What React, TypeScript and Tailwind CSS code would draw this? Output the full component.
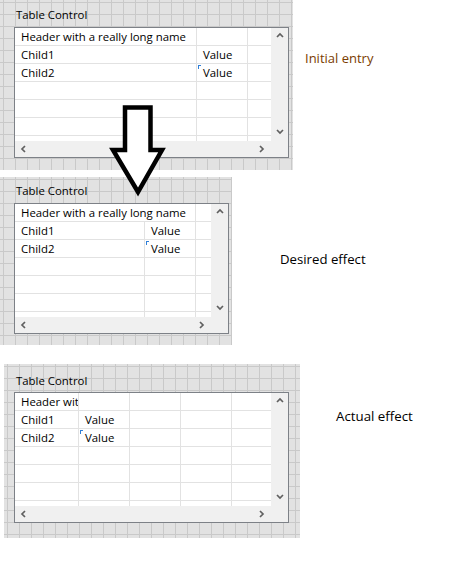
import React from "react"

const font = "font-['Segoe_UI','Open_Sans','Noto_Sans',sans-serif]"

const gridBg =
  "bg-[#e2e2e2] bg-[linear-gradient(to_right,#c9c9c9_1px,transparent_1px),linear-gradient(to_bottom,#c9c9c9_1px,transparent_1px)] bg-[size:12px_12px] bg-[position:3px_2px]"

type Row = { name: string; value?: string; mark?: boolean }

const rows: Row[] = [
  { name: "Header with a really long name" },
  { name: "Child1", value: "Value" },
  { name: "Child2", value: "Value", mark: true },
  { name: "" },
  { name: "" },
  { name: "" },
  { name: "" },
]

function Chevron({ dir }: { dir: "up" | "down" | "left" | "right" }) {
  const pts = {
    up: "1,5 4,2 7,5",
    down: "1,2 4,5 7,2",
    left: "5,1 2,4 5,7",
    right: "2,1 5,4 2,7",
  }[dir]
  return (
    <svg width="8" height="8" viewBox="0 0 8 8" className="block">
      <polyline points={pts} fill="none" stroke="#606060" strokeWidth="1.7" />
    </svg>
  )
}

function TableBox({ width, cols, spanHeader }: { width: number; cols: number[]; spanHeader?: boolean }) {
  return (
    <div
      className="flex h-[131px] flex-col border border-[#7d8187] bg-[#f0f0f0]"
      style={{ width }}
    >
      <div className="flex h-[113px]">
        <div className="h-full flex-1 overflow-hidden bg-white">
          {rows.map((r, i) => {
            // header row may span the first two columns
            const widths = i === 0 && spanHeader ? [cols[0] + cols[1], ...cols.slice(2)] : cols
            return (
              <div key={i} className="flex h-[18px] border-b border-[#e2e2e2]">
                {widths.map((w, c) => (
                  <div
                    key={c}
                    className="relative flex h-full shrink-0 items-center overflow-hidden whitespace-nowrap border-r border-[#e2e2e2] pl-[6px]"
                    style={{ width: w }}
                  >
                    {c === 0 ? r.name : c === 1 ? r.value : null}
                    {c === 1 && r.mark && (
                      <span className="absolute left-[1px] top-[1px] h-[4px] w-[3px] border-l border-t border-[#2f7fd8]" />
                    )}
                  </div>
                ))}
                <div className="h-full flex-1" />
              </div>
            )
          })}
        </div>
        <div className="flex w-[17px] flex-col items-center justify-between pb-[5px] pt-[4px]">
          <Chevron dir="up" />
          <Chevron dir="down" />
        </div>
      </div>
      <div className="flex h-[16px] items-center">
        <div className="flex flex-1 items-center justify-between pl-[5px] pr-[5px]">
          <Chevron dir="left" />
          <Chevron dir="right" />
        </div>
        <div className="w-[17px]" />
      </div>
    </div>
  )
}

function Arrow() {
  return (
    <svg
      width="70"
      height="100"
      viewBox="100 100 70 100"
      className="pointer-events-none absolute left-[100px] top-[100px]"
    >
      <path
        d="M125 107.5 L150.5 107.5 L150.5 150 L162 150 L138 192 L113 150 L125 150 Z"
        fill="white"
        stroke="black"
        strokeWidth="4.5"
        strokeLinejoin="miter"
      />
    </svg>
  )
}

export default function App() {
  return (
    <div className={`relative h-[563px] w-[475px] bg-white text-[11.4px] text-black ${font}`}>
      <div className="flex">
        <div className={`h-[170px] w-[293px] pl-[14px] pt-[7px] ${gridBg}`}>
          <div className="h-4 pl-[2px] leading-4">Table Control</div>
          <div className="mt-[4px]">
            <TableBox width={275} cols={[182, 51]} />
          </div>
        </div>
        <div className="ml-[12px] mt-[49px] text-[13px] leading-[18px] text-[#7a3c00]">Initial entry</div>
      </div>

      <div className="mt-[7px] flex">
        <div className={`h-[168px] w-[232px] pl-[14px] pt-[6px] ${gridBg}`}>
          <div className="h-4 pl-[2px] leading-4">Table Control</div>
          <div className="mt-[4px]">
            <TableBox width={215} cols={[130, 51]} spanHeader />
          </div>
        </div>
        <div className="ml-[48px] mt-[73px] text-[13.2px] leading-[18px]">Desired effect</div>
      </div>

      <div className="ml-[4px] mt-[19px] flex">
        <div className={`h-[174px] w-[296px] pl-[10px] pt-[9px] ${gridBg}`}>
          <div className="h-4 pl-[2px] leading-4">Table Control</div>
          <div className="mt-[3px]">
            <TableBox width={275} cols={[64, 51, 51, 51]} />
          </div>
        </div>
        <div className="ml-[36px] mt-[43px] text-[13.3px] leading-[18px]">Actual effect</div>
      </div>

      <Arrow />
    </div>
  )
}
